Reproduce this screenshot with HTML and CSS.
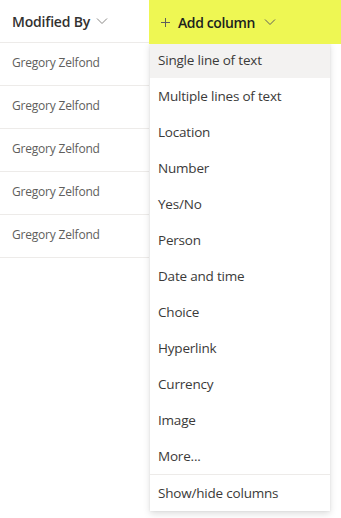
FILE: index.html
```html
<!DOCTYPE html>
<html>
<head>
<meta charset="utf-8">
<link rel="stylesheet" href="styles.css">
</head>
<body>
<div class="table">
  <div class="header">
    <div class="hcell left">
      <span class="htitle">Modified By</span>
      <svg class="chev" width="12" height="8" viewBox="0 0 12 8"><path d="M1 1.5 L6 6.5 L11 1.5" fill="none" stroke="#8a8886" stroke-width="1"/></svg>
    </div>
    <div class="hcell add">
      <svg class="plus" width="9" height="9" viewBox="0 0 9 9"><path d="M4.5 0 V9 M0 4.5 H9" stroke="#605e5c" stroke-width="1"/></svg>
      <span class="htitle">Add column</span>
      <svg class="chev" width="12" height="8" viewBox="0 0 12 8"><path d="M1 1.5 L6 6.5 L11 1.5" fill="none" stroke="#605e5c" stroke-width="1"/></svg>
    </div>
  </div>
  <div class="row"><div class="cell">Gregory Zelfond</div></div>
  <div class="row"><div class="cell">Gregory Zelfond</div></div>
  <div class="row"><div class="cell">Gregory Zelfond</div></div>
  <div class="row"><div class="cell">Gregory Zelfond</div></div>
  <div class="row"><div class="cell">Gregory Zelfond</div></div>
</div>
<div class="menu">
  <div class="item active">Single line of text</div>
  <div class="item">Multiple lines of text</div>
  <div class="item">Location</div>
  <div class="item">Number</div>
  <div class="item">Yes/No</div>
  <div class="item">Person</div>
  <div class="item">Date and time</div>
  <div class="item">Choice</div>
  <div class="item">Hyperlink</div>
  <div class="item">Currency</div>
  <div class="item">Image</div>
  <div class="item">More...</div>
  <div class="divider"></div>
  <div class="item">Show/hide columns</div>
</div>
</body>
</html>
```
FILE: styles.css
```css
html, body {
  margin: 0;
  padding: 0;
  background: #ffffff;
}
body {
  font-family: "Open Sans", "Noto Sans", sans-serif;
  color: #323130;
  position: relative;
  width: 341px;
  height: 518px;
  overflow: hidden;
}
.table {
  display: flex;
  flex-direction: column;
}
.header {
  display: flex;
  height: 43px;
  position: relative;
  z-index: 2;
}
.hcell {
  display: flex;
  align-items: center;
}
.hcell.left {
  width: 149px;
  padding-left: 12px;
  border-bottom: 1px solid #edebe9;
  box-sizing: border-box;
  height: 43px;
  gap: 6px;
}
.hcell.add {
  flex: 1;
  background: #eef753;
  padding-left: 12px;
  height: 44px;
  gap: 8px;
}
.htitle {
  font-size: 14px;
  font-weight: 600;
  color: #323130;
  letter-spacing: -0.2px;
}
.add .htitle {
  color: #201f1e;
  letter-spacing: -0.4px;
}
.add .chev {
  margin-left: 1px;
}
.row {
  width: 149px;
  height: 43px;
  border-bottom: 1px solid #edebe9;
  box-sizing: border-box;
  display: flex;
  align-items: center;
  padding-bottom: 4px;
}
.cell {
  padding-left: 12px;
  font-size: 12px;
  color: #605e5c;
  letter-spacing: -0.2px;
}
.menu {
  position: absolute;
  left: 150px;
  top: 42px;
  width: 180px;
  background: #ffffff;
  box-shadow: 0 3px 7px rgba(0, 0, 0, 0.13), 0 0 2px rgba(0, 0, 0, 0.08);
  z-index: 1;
}
.item {
  height: 36px;
  display: flex;
  align-items: center;
  padding-left: 8px;
  font-size: 13.5px;
  color: #3b3a39;
  letter-spacing: -0.2px;
}
.item.active {
  background: #f3f2f1;
}
.divider {
  height: 1px;
  background: #edebe9;
}
```
